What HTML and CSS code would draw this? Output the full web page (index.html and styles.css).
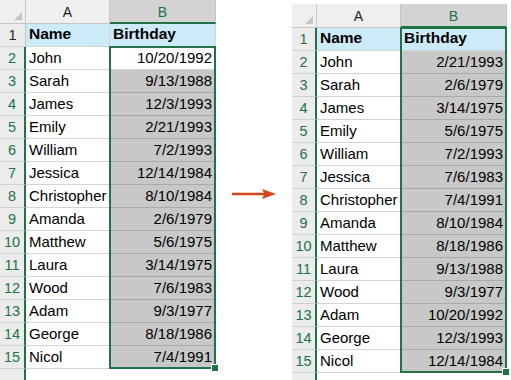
FILE: index.html
```html
<!DOCTYPE html>
<html>
<head>
<meta charset="utf-8">
<link rel="stylesheet" href="styles.css">
</head>
<body>
<div class="page">
  <div class="sheet left">
    <div class="corner"><span class="tri"></span></div>
    <div class="ch">A</div>
    <div class="ch sel">B</div>

    <div class="rh">1</div><div class="c hdr bold">Name</div><div class="c hdr bold">Birthday</div>
    <div class="rh sel">2</div><div class="c">John</div><div class="c num">10/20/1992</div>
    <div class="rh sel">3</div><div class="c">Sarah</div><div class="c num g">9/13/1988</div>
    <div class="rh sel">4</div><div class="c">James</div><div class="c num g">12/3/1993</div>
    <div class="rh sel">5</div><div class="c">Emily</div><div class="c num g">2/21/1993</div>
    <div class="rh sel">6</div><div class="c">William</div><div class="c num g">7/2/1993</div>
    <div class="rh sel">7</div><div class="c">Jessica</div><div class="c num g">12/14/1984</div>
    <div class="rh sel">8</div><div class="c">Christopher</div><div class="c num g">8/10/1984</div>
    <div class="rh sel">9</div><div class="c">Amanda</div><div class="c num g">2/6/1979</div>
    <div class="rh sel">10</div><div class="c">Matthew</div><div class="c num g">5/6/1975</div>
    <div class="rh sel">11</div><div class="c">Laura</div><div class="c num g">3/14/1975</div>
    <div class="rh sel">12</div><div class="c">Wood</div><div class="c num g">7/6/1983</div>
    <div class="rh sel">13</div><div class="c">Adam</div><div class="c num g">9/3/1977</div>
    <div class="rh sel">14</div><div class="c">George</div><div class="c num g">8/18/1986</div>
    <div class="rh sel">15</div><div class="c">Nicol</div><div class="c num g">7/4/1991</div>
    <div class="rh sel tail"></div><div class="blank"></div><div class="blank"></div>

    <div class="selection left-sel"><span class="handle"></span></div>
  </div>

  <div class="arrow">
    <svg width="46" height="12" viewBox="0 0 46 12">
      <line x1="0" y1="6" x2="33" y2="6" stroke="#d2461c" stroke-width="2.4"/>
      <polygon points="30,1 44,6 30,11 32.5,6" fill="#d2461c"/>
    </svg>
  </div>

  <div class="sheet right">
    <div class="corner"><span class="tri"></span></div>
    <div class="ch">A</div>
    <div class="ch sel">B</div>

    <div class="rh sel">1</div><div class="c hdr bold">Name</div><div class="c hdr bold">Birthday</div>
    <div class="rh sel">2</div><div class="c">John</div><div class="c num g">2/21/1993</div>
    <div class="rh sel">3</div><div class="c">Sarah</div><div class="c num g">2/6/1979</div>
    <div class="rh sel">4</div><div class="c">James</div><div class="c num g">3/14/1975</div>
    <div class="rh sel">5</div><div class="c">Emily</div><div class="c num g">5/6/1975</div>
    <div class="rh sel">6</div><div class="c">William</div><div class="c num g">7/2/1993</div>
    <div class="rh sel">7</div><div class="c">Jessica</div><div class="c num g">7/6/1983</div>
    <div class="rh sel">8</div><div class="c">Christopher</div><div class="c num g">7/4/1991</div>
    <div class="rh sel">9</div><div class="c">Amanda</div><div class="c num g">8/10/1984</div>
    <div class="rh sel">10</div><div class="c">Matthew</div><div class="c num g">8/18/1986</div>
    <div class="rh sel">11</div><div class="c">Laura</div><div class="c num g">9/13/1988</div>
    <div class="rh sel">12</div><div class="c">Wood</div><div class="c num g">9/3/1977</div>
    <div class="rh sel">13</div><div class="c">Adam</div><div class="c num g">10/20/1992</div>
    <div class="rh sel">14</div><div class="c">George</div><div class="c num g">12/3/1993</div>
    <div class="rh sel">15</div><div class="c">Nicol</div><div class="c num g">12/14/1984</div>
    <div class="rh sel tail"></div><div class="blank"></div><div class="blank"></div>

    <div class="selection right-sel"><span class="handle"></span></div>
  </div>
</div>
</body>
</html>
```

FILE: styles.css
```css
html, body {
  margin: 0;
  padding: 0;
  background: #ffffff;
}

.page {
  display: flex;
  align-items: flex-start;
  width: 511px;
  height: 380px;
  overflow: hidden;
  font-family: "Liberation Sans", Arial, sans-serif;
  color: #000;
}

.sheet {
  display: grid;
  position: relative;
  grid-template-rows: 24px repeat(15, 23px) 12px;
}

.sheet.left {
  grid-template-columns: 26px 84px 106px;
}

.sheet.right {
  grid-template-columns: 25px 84px 106px;
  margin-top: 4px;
  grid-template-rows: 24px repeat(15, 23px) 8px;
}

.sheet > div {
  box-sizing: border-box;
}

.corner {
  background: #efefef;
  border-right: 1px solid #c6c6c6;
  border-bottom: 1px solid #c6c6c6;
  display: flex;
  justify-content: flex-end;
  align-items: flex-end;
  padding: 0 3px 3px 0;
}

.tri {
  width: 0;
  height: 0;
  border-left: 8px solid transparent;
  border-bottom: 8px solid #c4c4c4;
}

.ch {
  background: #efefef;
  border-right: 1px solid #c6c6c6;
  border-bottom: 1px solid #c6c6c6;
  display: flex;
  align-items: center;
  justify-content: center;
  font-size: 14px;
  color: #222;
  padding-top: 1px;
}

.ch.sel {
  background: #d3d3d3;
  color: #217346;
  border-bottom: 2px solid #217346;
}

.rh {
  background: #ececec;
  border-right: 1px solid #c6c6c6;
  border-bottom: 1px solid #d0d0d0;
  display: flex;
  align-items: flex-end;
  justify-content: center;
  font-size: 14.5px;
  color: #222;
  padding-bottom: 3px;
}

.rh.sel {
  color: #217346;
  border-right: 2px solid #217346;
}

.rh.tail {
  border-bottom: none;
}

.c {
  border-right: 1px solid #d4d4d4;
  border-bottom: 1px solid #d4d4d4;
  display: flex;
  align-items: flex-end;
  padding: 0 3px 3px 3px;
  font-size: 15px;
  white-space: nowrap;
  overflow: hidden;
}

.c.hdr {
  background: #cdeaf9;
}

.bold {
  font-weight: bold;
  font-size: 15.5px;
}

.c.num {
  justify-content: flex-end;
}

.c.g {
  background: #c8c8c8;
  border-bottom-color: #aaaaaa;
}

.blank {
  background: #fff;
}

.selection {
  position: absolute;
  grid-column: 3;
  top: -1px;
  left: -1px;
  right: 0;
  bottom: 0;
  border: 2px solid #217346;
  pointer-events: none;
}

.left-sel {
  grid-row: 3 / 17;
}

.right-sel {
  grid-row: 2 / 17;
}

.handle {
  position: absolute;
  right: -5px;
  bottom: -5px;
  width: 6px;
  height: 6px;
  background: #217346;
  border: 1px solid #fff;
}

.arrow {
  width: 76px;
  display: flex;
  justify-content: center;
  margin-top: 188px;
  padding-left: 2px;
  box-sizing: border-box;
}

.arrow svg {
  display: block;
}
```
